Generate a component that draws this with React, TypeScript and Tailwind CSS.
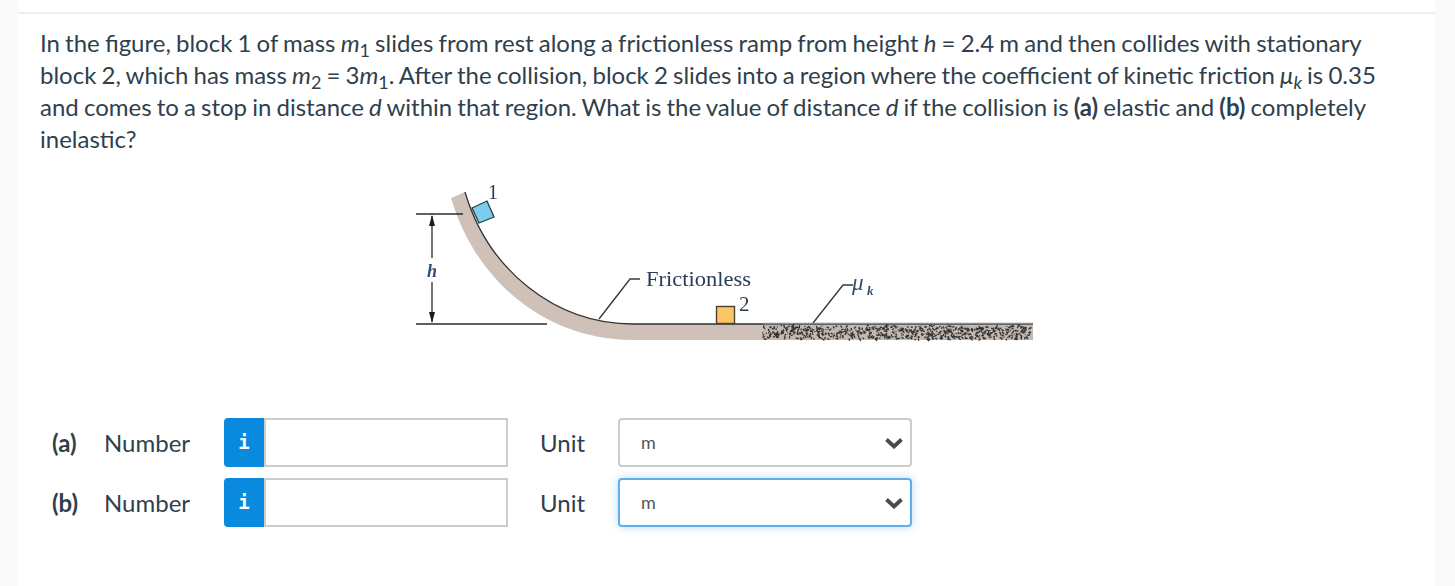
import React from 'react';

// speckle for the rough region, fixed seed so each render is the same
function roughDots() {
  const dots: string[] = [];
  let seed = 7;
  const next = () => {
    seed = (seed * 16807) % 2147483647;
    return seed / 2147483647;
  };
  for (let i = 0; i < 760; i++) {
    const x = 763 + next() * 268;
    const y = 326 + next() * 13;
    const dx = (next() - 0.3) * 4;
    const dy = (next() - 0.5) * 5;
    dots.push(`M${x.toFixed(1)} ${y.toFixed(1)}l${dx.toFixed(1)} ${dy.toFixed(1)}`);
  }
  return dots.join('');
}

function RampFigure() {
  return (
    <svg width="630" height="170" viewBox="410 180 630 170" className="ml-[392px] block">
      <defs>
        <filter id="soft" x="-5%" y="-5%" width="110%" height="110%">
          <feGaussianBlur stdDeviation="0.45" />
        </filter>
      </defs>
      <g filter="url(#soft)">
        {/* ramp body */}
        <path
          d="M451 198 L465 192 C488 270 555 324 633 324 L1033 324 L1033 340 L633 340 C545 340 475 280 451 198 Z"
          fill="#cfc1b8"
        />
        <path d="M465 192 C488 270 555 324 633 324 L1033 324" fill="none" stroke="#333333" strokeWidth="1.3" />
        <rect x="763" y="325" width="270" height="15" fill="#c4b9b1" />
        <path d="M763 323.5H1033" stroke="#8d8d8d" strokeWidth="1.6" />
        <path d={roughDots()} stroke="#333333" strokeWidth="1.3" fill="none" />

        {/* height marker */}
        <path d="M416 214 H463 M416 324 H547" stroke="#2b2b2b" strokeWidth="1.4" fill="none" />
        <path d="M432 216 V258 M432 282 V322" stroke="#2b2b2b" strokeWidth="1.3" fill="none" />
        <path d="M432 215 L429 226 H435 Z M432 323 L429 312 H435 Z" fill="#1f1f1f" />
        <text x="432" y="277" textAnchor="middle" fontFamily="'Liberation Serif', serif" fontStyle="italic" fontWeight="700" fontSize="18" fill="#33506e">h</text>

        {/* block 1 */}
        <path d="M472 208 L487 201 L494 217 L479 223 Z" fill="#7ecdf0" stroke="#2c3c46" strokeWidth="1.3" />
        <text x="488" y="199" fontFamily="'Liberation Serif', serif" fontSize="20" fill="#2c3a55">1</text>

        {/* block 2 */}
        <rect x="716.5" y="306.5" width="18" height="17" fill="#fcc566" stroke="#4a4030" strokeWidth="1.4" />
        <text x="739" y="311" fontFamily="'Liberation Serif', serif" fontSize="21" fill="#2c3a55">2</text>

        {/* labels and leader lines */}
        <path d="M599 319 L630 279 H640" stroke="#3a3a3a" strokeWidth="1.4" fill="none" />
        <text x="646" y="286" textLength="105" lengthAdjust="spacingAndGlyphs" fontFamily="'Liberation Serif', serif" fontSize="20" fill="#2c3a55">Frictionless</text>
        <path d="M813 323 L843 285 H853" stroke="#3a3a3a" strokeWidth="1.4" fill="none" />
        <text x="852" y="290" fontFamily="'Liberation Serif', serif" fontStyle="italic" fontSize="23" fill="#33506e">μ</text>
        <text x="867" y="295" fontFamily="'Liberation Serif', serif" fontStyle="italic" fontWeight="700" fontSize="13" fill="#33506e">k</text>
      </g>
    </svg>
  );
}

function Chevron() {
  return (
    <svg width="18" height="12" viewBox="0 0 18 12" className="shrink-0">
      <path d="M1.5 2.5 L9 9.5 L16.5 2.5" fill="none" stroke="#4a4a4a" strokeWidth="3.8" />
    </svg>
  );
}

function AnswerRow({ part, focused }: { part: string; focused?: boolean }) {
  return (
    <div className="flex h-[49px] items-center text-[24px] text-[#2f3f4d]">
      <span className="ml-[34px] w-[52px] font-bold">({part})</span>
      <span className="w-[120px]">Number</span>
      <div className="flex h-[49px] w-10 items-center justify-center rounded-l bg-[#0a8ade] font-['DejaVu_Sans_Mono',monospace] text-[19px] font-bold text-white">
        i
      </div>
      <div className="h-[49px] w-[244px] border-2 border-[#cccccc] bg-white" />
      <span className="ml-[32px] w-[78px]">Unit</span>
      <div
        className={
          focused
            ? 'flex h-[49px] w-[294px] items-center justify-between rounded border-2 border-[#5eaeea] bg-white pl-[21px] pr-[7px] shadow-[0_0_8px_rgba(94,174,234,0.45)]'
            : 'flex h-[49px] w-[294px] items-center justify-between rounded border-2 border-[#cccccc] bg-white pl-[21px] pr-[7px]'
        }
      >
        <span className="text-[18px] text-[#555555]">m</span>
        <Chevron />
      </div>
    </div>
  );
}

export default function App() {
  return (
    <div className="h-[586px] overflow-hidden bg-[#fafafa] pl-[18px] pr-5 font-['Lato',sans-serif]">
      <div className="h-full bg-white pt-3">
        <div className="border-t-2 border-[#efefef] pl-[22px] pt-[13px]">
          <p className="w-[1345px] text-[24px] leading-8 text-[#2f3f4d] [word-spacing:-1px]">
            In the figure, block 1 of mass <i>m</i><sub>1</sub> slides from rest along a frictionless ramp from height <i>h</i> = 2.4 m and then collides with stationary block 2, which has mass <i>m</i><sub>2</sub> = 3<i>m</i><sub>1</sub>. After the collision, block 2 slides into a region where the coefficient of kinetic friction <i>μ<sub>k</sub></i> is 0.35 and comes to a stop in distance <i>d</i> within that region. What is the value of distance <i>d</i> if the collision is <b>(a)</b> elastic and <b>(b)</b> completely inelastic?
          </p>
        </div>
        <div className="mt-[25px]">
          <RampFigure />
        </div>
        <div className="mt-[68px] flex flex-col gap-[11px]">
          <AnswerRow part="a" />
          <AnswerRow part="b" focused />
        </div>
      </div>
    </div>
  );
}
